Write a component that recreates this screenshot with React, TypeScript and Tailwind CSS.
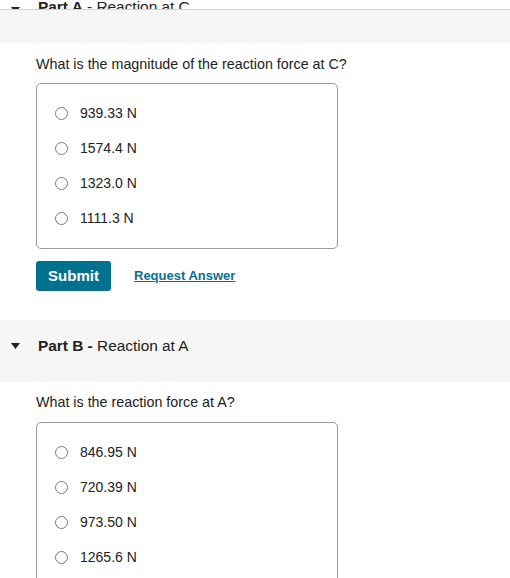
const font = { fontFamily: '"Liberation Sans", Arial, sans-serif' };

function Caret() {
  return (
    <svg width="9" height="6" viewBox="0 0 9 6" className="shrink-0">
      <path d="M0 0 L9 0 L4.5 6 Z" fill="#222" />
    </svg>
  );
}

function Radio({ label }: { label: string }) {
  return (
    <label className="flex h-[35px] items-center pl-[18px]">
      <span className="h-[13px] w-[13px] rounded-full border border-[#7a7a7a] bg-white" />
      <span className="ml-[12px] text-[14px] text-[#222]">{label}</span>
    </label>
  );
}

function Choices({ items }: { items: string[] }) {
  return (
    <div className="ml-[36px] w-[302px] rounded-[5px] border border-[#9a9a9a] py-[12px]">
      {items.map((x) => (
        <Radio key={x} label={x} />
      ))}
    </div>
  );
}

export default function App() {
  return (
    <div style={font} className="w-[510px] h-[578px] overflow-hidden bg-white text-[#222]">
      {/* Part A header, scrolled mostly out of view */}
      <div className="h-[9px] overflow-hidden">
        <div className="relative h-[17px] mt-[-2px]">
          <div className="absolute left-[11px] top-[9px]">
            <Caret />
          </div>
          <div className="absolute left-[38px] top-[0px] text-[15.4px] leading-[17px] whitespace-nowrap">
            <span className="font-bold">Part A</span> - Reaction at C
          </div>
        </div>
      </div>
      <div className="h-[1px] bg-[#d4d4d4]" />
      <div className="h-[33px] bg-[#f6f6f6]" />

      <p className="mt-[13px] ml-[36px] text-[14.3px] leading-[16px]">
        What is the magnitude of the reaction force at C?
      </p>
      <div className="mt-[11px]">
        <Choices items={["939.33 N", "1574.4 N", "1323.0 N", "1111.3 N"]} />
      </div>

      <div className="mt-[12px] ml-[36px] flex items-center">
        <button className="h-[30px] w-[75px] rounded-[3px] bg-[#00718f] text-[15px] font-semibold text-white">
          Submit
        </button>
        <a className="ml-[23px] text-[13px] font-bold text-[#0b6d97] underline">
          Request Answer
        </a>
      </div>

      <div className="mt-[29px] h-[62px] bg-[#f6f6f6] flex items-start pt-[17px]">
        <div className="flex items-center h-[17px]">
          <div className="ml-[11px]">
            <Caret />
          </div>
          <div className="ml-[18px] text-[15.4px] leading-[17px]">
            <span className="font-bold">Part B -</span> Reaction at A
          </div>
        </div>
      </div>

      <p className="mt-[12px] ml-[36px] text-[14.3px] leading-[16px]">
        What is the reaction force at A?
      </p>
      <div className="mt-[12px]">
        <Choices items={["846.95 N", "720.39 N", "973.50 N", "1265.6 N"]} />
      </div>
    </div>
  );
}
